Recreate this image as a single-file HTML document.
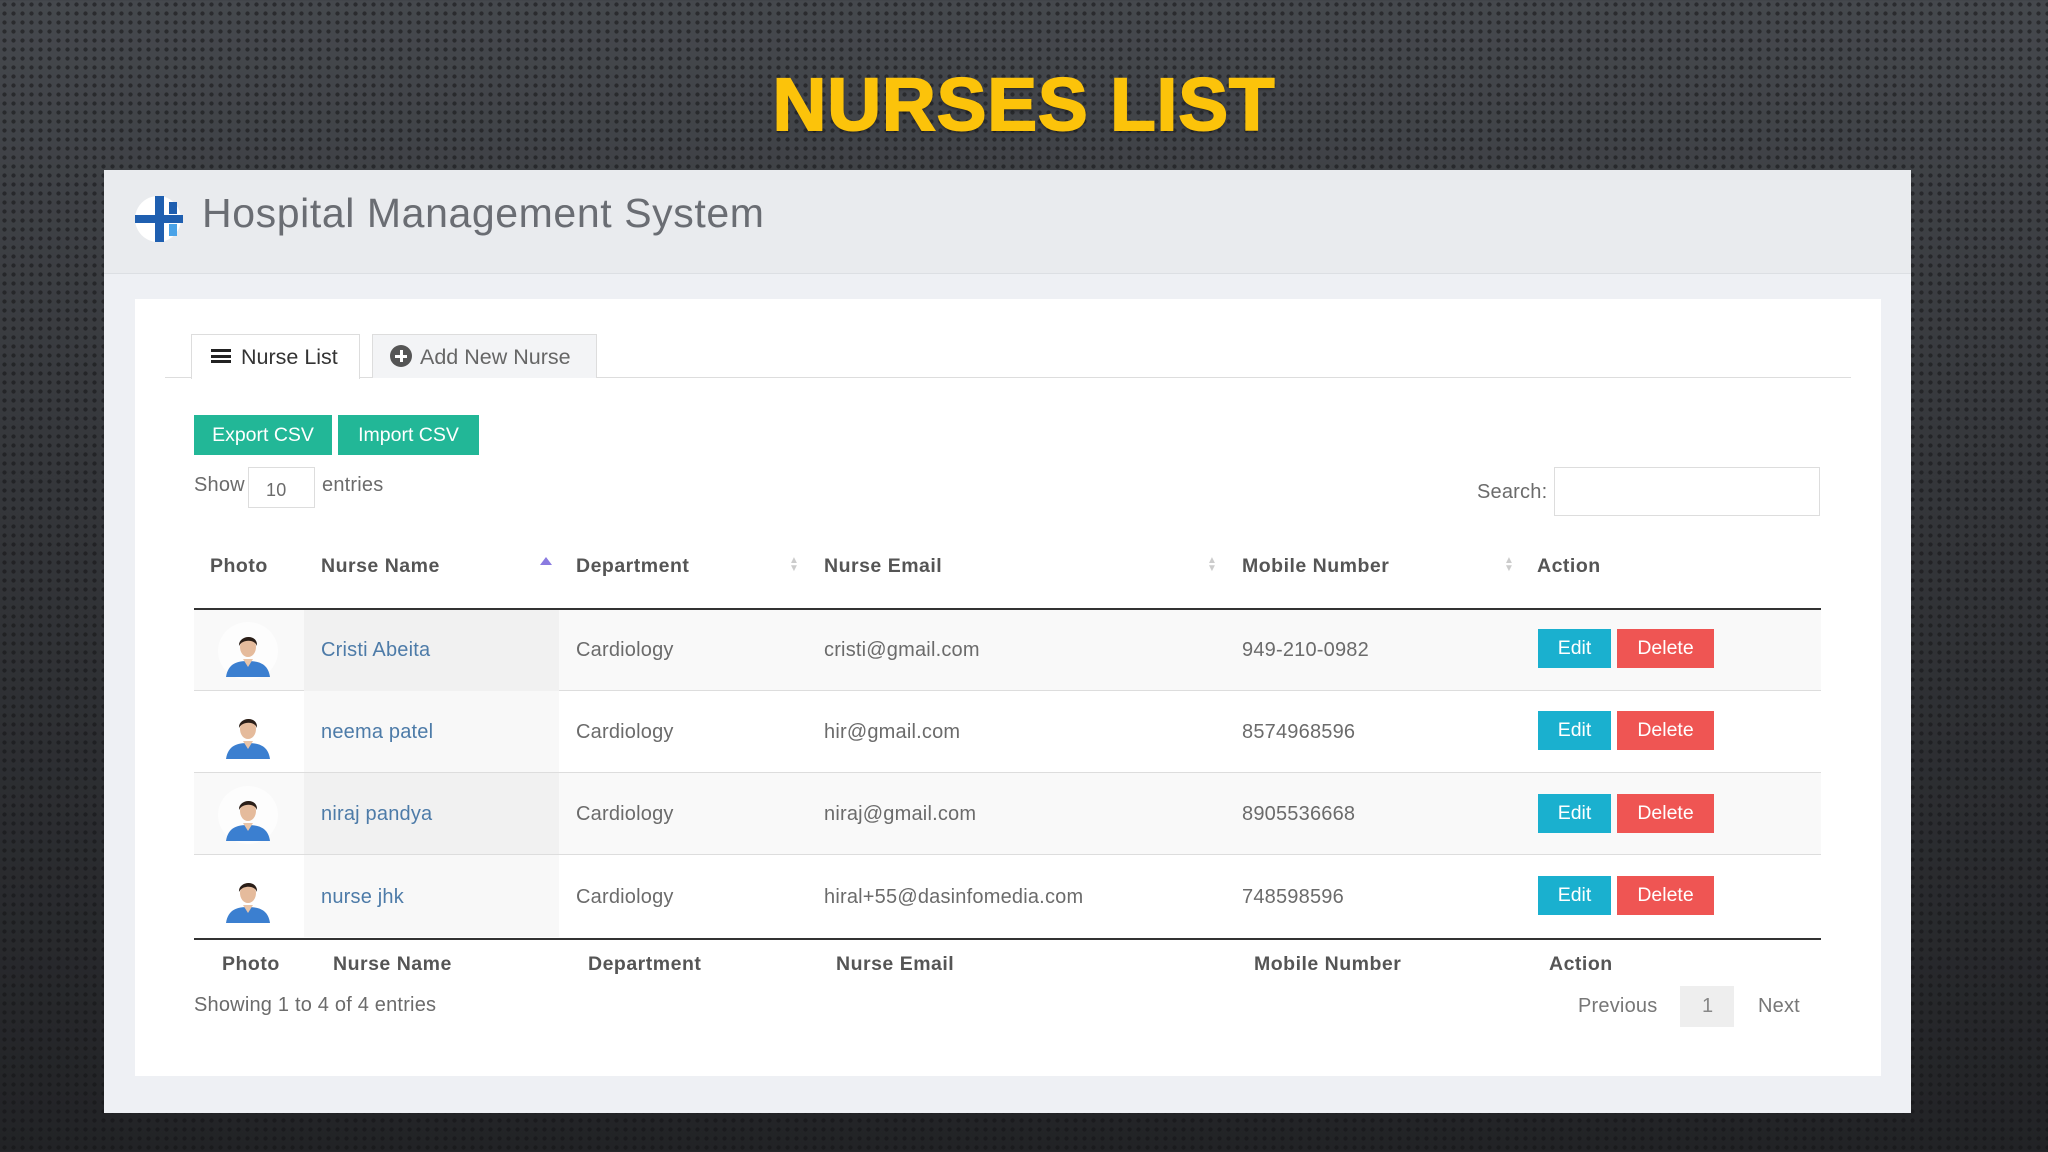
<!DOCTYPE html>
<html><head><meta charset="utf-8">
<style>
*{margin:0;padding:0;box-sizing:border-box}
body{width:2048px;height:1152px;overflow:hidden;font-family:"Liberation Sans",sans-serif;position:relative;
background:radial-gradient(circle,rgba(20,20,22,.55) 1.8px,transparent 2.4px) 0 0/9px 9px,linear-gradient(#45484d,#35373b 40%,#222326);}
.a{position:absolute}
h1{position:absolute;left:0;width:2048px;top:62px;text-align:center;font-size:74px;font-weight:900;color:#fcc30a;letter-spacing:1px;-webkit-text-stroke:2px #fcc30a;text-shadow:0 2px 3px rgba(0,0,0,.5);transform:scaleX(1.005)}
.panel{left:104px;top:170px;width:1807px;height:943px;background:#eef0f4}
.head{left:104px;top:170px;width:1807px;height:104px;background:#e9ebee;border-bottom:1px solid #dcdfe3}
.card{left:135px;top:299px;width:1746px;height:777px;background:#fff}
.t{font-size:20px;color:#6b6b6b;white-space:nowrap;letter-spacing:.2px}
.tab{top:334px;height:44px;border:1px solid #ddd;border-bottom:none;font-size:21.5px;padding-top:10px;white-space:nowrap}
.btn{color:#fff;font-size:19.5px;text-align:center;white-space:nowrap}
.th{font-size:19.5px;font-weight:bold;color:#555;white-space:nowrap;letter-spacing:.5px}
.lnk{color:#4d7ba8}
</style></head><body>
<h1>NURSES LIST</h1>
<div class="a panel"></div>
<div class="a head"></div>
<svg class="a" style="left:133px;top:194px" width="60" height="50" viewBox="0 0 60 50">
<circle cx="25" cy="25" r="23" fill="#fff"/>
<rect x="22" y="2" width="9" height="46" fill="#1f5fb0"/>
<rect x="2" y="21" width="48" height="8" fill="#1f5fb0"/>
<rect x="36" y="8" width="8" height="12" fill="#1f5fb0"/>
<rect x="36" y="30" width="8" height="12" fill="#4aa3e8"/>
</svg>
<div class="a" style="left:202px;top:190px;font-size:41px;letter-spacing:.6px;color:#6a6d73;white-space:nowrap">Hospital Management System</div>
<div class="a card"></div>
<div class="a" style="left:165px;top:377px;width:1686px;height:1px;background:#ddd"></div>
<div class="a tab" style="left:191px;width:169px;height:45px;background:#fff;color:#333;padding-left:19px"><span style="display:inline-block;vertical-align:middle;width:20px;height:14px;border-top:3px solid #222;border-bottom:3px solid #222;position:relative;margin-right:10px;top:-2px"><span style="position:absolute;left:0;top:2.5px;width:20px;height:3px;background:#222"></span></span>Nurse List</div>
<div class="a tab" style="left:372px;width:225px;background:#f3f4f6;color:#666;padding-left:17px"><span style="display:inline-block;vertical-align:middle;width:22px;height:22px;border-radius:50%;background:#555;position:relative;margin-right:8px;top:-2px"><span style="position:absolute;left:5px;top:9.5px;width:12px;height:3px;background:#fff"></span><span style="position:absolute;left:9.5px;top:5px;width:3px;height:12px;background:#fff"></span></span>Add New Nurse</div>
<div class="a btn" style="left:194px;top:415px;width:138px;height:40px;background:#22b797;padding-top:9px">Export CSV</div>
<div class="a btn" style="left:338px;top:415px;width:141px;height:40px;background:#22b797;padding-top:9px">Import CSV</div>
<div class="a t" style="left:194px;top:474px">Show</div>
<div class="a t" style="left:248px;top:467px;width:67px;height:41px;border:1px solid #ddd;padding:12px 0 0 17px;font-size:18px">10</div>
<div class="a t" style="left:322px;top:474px">entries</div>
<div class="a t" style="left:1477px;top:481px">Search:</div>
<div class="a" style="left:1554px;top:467px;width:266px;height:49px;border:1px solid #ddd"></div>
<div class="a th" style="left:210px;top:555px">Photo</div>
<div class="a th" style="left:321px;top:555px">Nurse Name</div>
<div class="a th" style="left:576px;top:555px">Department</div>
<div class="a th" style="left:824px;top:555px">Nurse Email</div>
<div class="a th" style="left:1242px;top:555px">Mobile Number</div>
<div class="a th" style="left:1537px;top:555px">Action</div>
<div class="a" style="left:540px;top:557px;width:0;height:0;border-left:6px solid transparent;border-right:6px solid transparent;border-bottom:8px solid #8a7be0"></div>
<div class="a" style="left:789px;top:557px;color:#ccc;font-size:10px;line-height:8px">▲<br>▼</div>
<div class="a" style="left:1207px;top:557px;color:#ccc;font-size:10px;line-height:8px">▲<br>▼</div>
<div class="a" style="left:1504px;top:557px;color:#ccc;font-size:10px;line-height:8px">▲<br>▼</div>
<div class="a" style="left:194px;top:608px;width:1627px;height:2px;background:#333"></div>

<div class="a" style="left:194px;top:610px;width:1627px;height:81px;background:#f9f9f9;border-bottom:1px solid #ddd"></div>
<div class="a" style="left:304px;top:610px;width:255px;height:81px;background:#f1f1f1"></div>
<div class="a" style="left:194px;top:691px;width:1627px;height:82px;background:#fff;border-bottom:1px solid #ddd"></div>
<div class="a" style="left:304px;top:691px;width:255px;height:81px;background:#f8f8f8"></div>
<div class="a" style="left:194px;top:773px;width:1627px;height:82px;background:#f9f9f9;border-bottom:1px solid #ddd"></div>
<div class="a" style="left:304px;top:773px;width:255px;height:81px;background:#f1f1f1"></div>
<div class="a" style="left:194px;top:855px;width:1627px;height:83px;background:#fff"></div>
<div class="a" style="left:304px;top:855px;width:255px;height:82px;background:#f8f8f8"></div>
<div class="a" style="left:194px;top:938px;width:1627px;height:2px;background:#333"></div>

<svg width="0" height="0" style="position:absolute"><defs><g id="n">
<ellipse cx="30" cy="30" rx="30" ry="29" fill="#fff" opacity=".7"/>
<path d="M8 56 C10 42 20 40 30 40 C40 40 50 42 52 56 Z" fill="#3b7fd0"/>
<path d="M25 38 L30 46 L35 38 Z" fill="#e8c4a8"/>
<ellipse cx="30" cy="26" rx="8" ry="10" fill="#e5bb9c"/>
<path d="M21 25 C20 14 40 12 39 25 C37 18 24 18 21 25 Z" fill="#2a1e18"/>
</g></defs></svg>
<svg class="a" style="left:218px;top:621px" width="60" height="60"><use href="#n"/></svg>
<svg class="a" style="left:218px;top:703px" width="60" height="60"><use href="#n"/></svg>
<svg class="a" style="left:218px;top:785px" width="60" height="60"><use href="#n"/></svg>
<svg class="a" style="left:218px;top:867px" width="60" height="60"><use href="#n"/></svg>

<div class="a t lnk" style="left:321px;top:639px">Cristi Abeita</div>
<div class="a t" style="left:576px;top:639px">Cardiology</div>
<div class="a t" style="left:824px;top:639px">cristi@gmail.com</div>
<div class="a t" style="left:1242px;top:639px">949-210-0982</div>
<div class="a t lnk" style="left:321px;top:721px">neema patel</div>
<div class="a t" style="left:576px;top:721px">Cardiology</div>
<div class="a t" style="left:824px;top:721px">hir@gmail.com</div>
<div class="a t" style="left:1242px;top:721px">8574968596</div>
<div class="a t lnk" style="left:321px;top:803px">niraj pandya</div>
<div class="a t" style="left:576px;top:803px">Cardiology</div>
<div class="a t" style="left:824px;top:803px">niraj@gmail.com</div>
<div class="a t" style="left:1242px;top:803px">8905536668</div>
<div class="a t lnk" style="left:321px;top:886px">nurse jhk</div>
<div class="a t" style="left:576px;top:886px">Cardiology</div>
<div class="a t" style="left:824px;top:886px">hiral+55@dasinfomedia.com</div>
<div class="a t" style="left:1242px;top:886px">748598596</div>

<div class="a btn" style="left:1538px;top:629px;width:73px;height:39px;background:#1ab0cf;padding-top:8px">Edit</div>
<div class="a btn" style="left:1617px;top:629px;width:97px;height:39px;background:#ef5553;padding-top:8px">Delete</div>
<div class="a btn" style="left:1538px;top:711px;width:73px;height:39px;background:#1ab0cf;padding-top:8px">Edit</div>
<div class="a btn" style="left:1617px;top:711px;width:97px;height:39px;background:#ef5553;padding-top:8px">Delete</div>
<div class="a btn" style="left:1538px;top:794px;width:73px;height:39px;background:#1ab0cf;padding-top:8px">Edit</div>
<div class="a btn" style="left:1617px;top:794px;width:97px;height:39px;background:#ef5553;padding-top:8px">Delete</div>
<div class="a btn" style="left:1538px;top:876px;width:73px;height:39px;background:#1ab0cf;padding-top:8px">Edit</div>
<div class="a btn" style="left:1617px;top:876px;width:97px;height:39px;background:#ef5553;padding-top:8px">Delete</div>

<div class="a th" style="left:222px;top:953px">Photo</div>
<div class="a th" style="left:333px;top:953px">Nurse Name</div>
<div class="a th" style="left:588px;top:953px">Department</div>
<div class="a th" style="left:836px;top:953px">Nurse Email</div>
<div class="a th" style="left:1254px;top:953px">Mobile Number</div>
<div class="a th" style="left:1549px;top:953px">Action</div>
<div class="a t" style="left:194px;top:994px">Showing 1 to 4 of 4 entries</div>
<div class="a t" style="left:1578px;top:995px;color:#777">Previous</div>
<div class="a" style="left:1680px;top:986px;width:54px;height:41px;background:#eee"></div>
<div class="a t" style="left:1702px;top:995px;color:#888">1</div>
<div class="a t" style="left:1758px;top:995px;color:#777">Next</div>
</body></html>
